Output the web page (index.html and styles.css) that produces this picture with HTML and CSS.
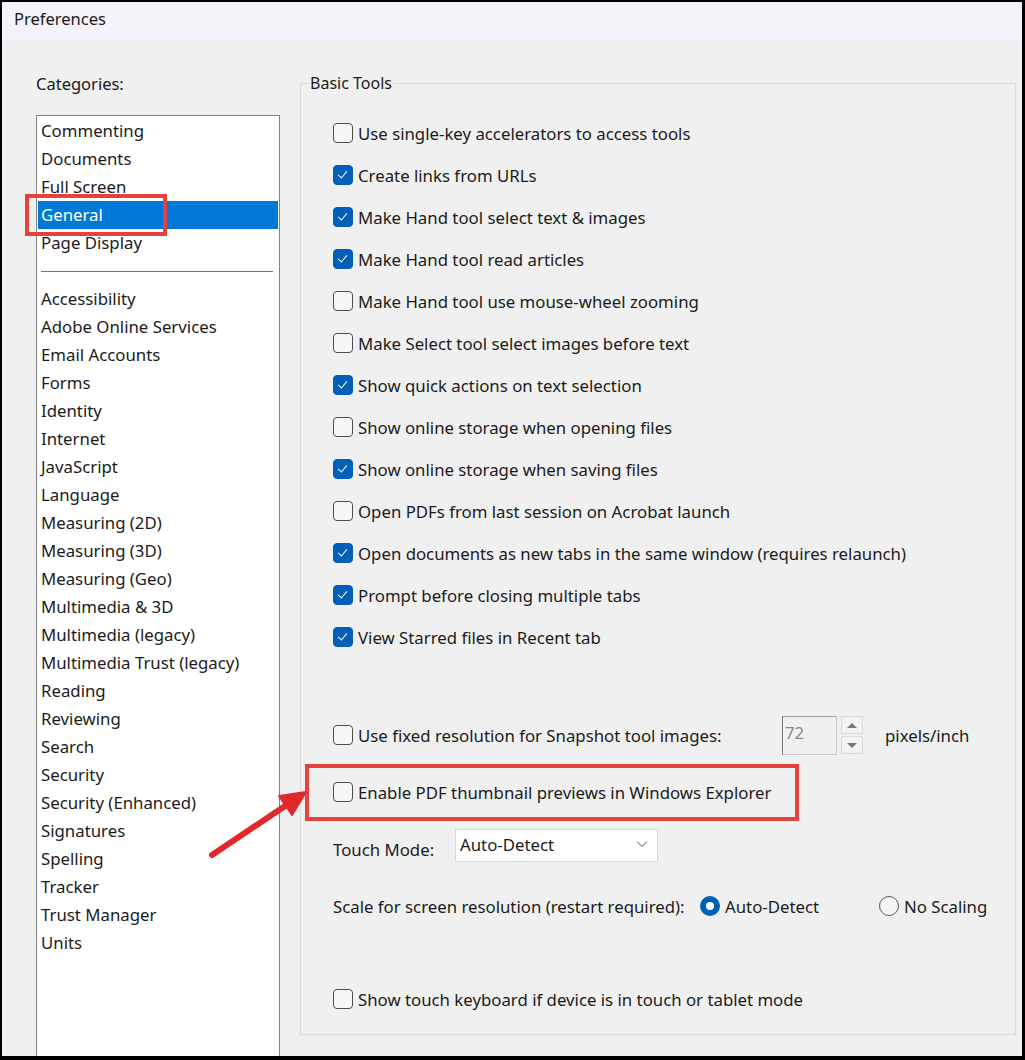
FILE: index.html
```html
<!DOCTYPE html>
<html>
<head>
<meta charset="utf-8">
<title>Preferences</title>
<link rel="stylesheet" href="styles.css">
</head>
<body>
<div class="window">
  <div class="titlebar">Preferences</div>
  <div class="content">
    <div class="left">
      <div class="cat-label">Categories:</div>
      <div class="listbox">
        <div class="item">Commenting</div>
        <div class="item">Documents</div>
        <div class="item">Full Screen</div>
        <div class="item selected">General<span class="mark-general"></span></div>
        <div class="item">Page Display</div>
        <div class="sep"><span></span></div>
        <div class="item">Accessibility</div>
        <div class="item">Adobe Online Services</div>
        <div class="item">Email Accounts</div>
        <div class="item">Forms</div>
        <div class="item">Identity</div>
        <div class="item">Internet</div>
        <div class="item">JavaScript</div>
        <div class="item">Language</div>
        <div class="item">Measuring (2D)</div>
        <div class="item">Measuring (3D)</div>
        <div class="item">Measuring (Geo)</div>
        <div class="item">Multimedia &amp; 3D</div>
        <div class="item">Multimedia (legacy)</div>
        <div class="item">Multimedia Trust (legacy)</div>
        <div class="item">Reading</div>
        <div class="item">Reviewing</div>
        <div class="item">Search</div>
        <div class="item">Security</div>
        <div class="item">Security (Enhanced)</div>
        <div class="item">Signatures</div>
        <div class="item">Spelling</div>
        <div class="item">Tracker</div>
        <div class="item">Trust Manager</div>
        <div class="item">Units</div>
      </div>
    </div>
    <fieldset class="group">
      <legend>Basic Tools</legend>
      <div class="rows">
        <div class="row"><span class="cb"></span><span>Use single-key accelerators to access tools</span></div>
        <div class="row"><span class="cb on"></span><span>Create links from URLs</span></div>
        <div class="row"><span class="cb on"></span><span>Make Hand tool select text &amp; images</span></div>
        <div class="row"><span class="cb on"></span><span>Make Hand tool read articles</span></div>
        <div class="row"><span class="cb"></span><span>Make Hand tool use mouse-wheel zooming</span></div>
        <div class="row"><span class="cb"></span><span>Make Select tool select images before text</span></div>
        <div class="row"><span class="cb on"></span><span>Show quick actions on text selection</span></div>
        <div class="row"><span class="cb"></span><span>Show online storage when opening files</span></div>
        <div class="row"><span class="cb on"></span><span>Show online storage when saving files</span></div>
        <div class="row"><span class="cb"></span><span>Open PDFs from last session on Acrobat launch</span></div>
        <div class="row"><span class="cb on"></span><span>Open documents as new tabs in the same window (requires relaunch)</span></div>
        <div class="row"><span class="cb on"></span><span>Prompt before closing multiple tabs</span></div>
        <div class="row"><span class="cb on"></span><span>View Starred files in Recent tab</span></div>

        <div class="row snapshot">
          <div class="snap-label"><span class="cb"></span><span>Use fixed resolution for Snapshot tool images:</span></div>
          <div class="numbox">72</div>
          <div class="spinner">
            <div class="spin"><span class="tri up"></span></div>
            <div class="spin"><span class="tri down"></span></div>
          </div>
          <span class="unit">pixels/inch</span>
        </div>

        <div class="row thumb"><span class="cb"></span><span>Enable PDF thumbnail previews in Windows Explorer</span><span class="mark-thumb"></span></div>

        <div class="row touch">
          <span class="touch-label">Touch Mode:</span>
          <div class="select"><span>Auto-Detect</span>
            <svg class="chev" width="12" height="8" viewBox="0 0 12 8"><path d="M1 1.5 L6 6.5 L11 1.5" fill="none" stroke="#555" stroke-width="1"/></svg>
          </div>
        </div>

        <div class="row scale">
          <span class="scale-label">Scale for screen resolution (restart required):</span>
          <div class="radio-opt first"><span class="rd on"></span><span>Auto-Detect</span></div>
          <div class="radio-opt"><span class="rd"></span><span>No Scaling</span></div>
        </div>

        <div class="row keyboard"><span class="cb"></span><span>Show touch keyboard if device is in touch or tablet mode</span></div>
      </div>
    </fieldset>
  </div>
  <svg class="arrow" width="120" height="90" viewBox="0 0 120 90">
    <line x1="12" y1="75" x2="88" y2="24" stroke="#e3282b" stroke-width="6" stroke-linecap="round"/>
    <polygon points="106,12 92,35 79,16" fill="#e3282b" stroke="#e3282b" stroke-width="2" stroke-linejoin="round"/>
  </svg>
</div>
</body>
</html>
```

FILE: styles.css
```css
html, body {
  margin: 0;
  padding: 0;
  background: #000;
}

body {
  font-family: "Noto Sans", "Open Sans", sans-serif;
  font-size: 16.8px;
  color: #1b1b1b;
}

.window {
  position: relative;
  margin: 2px 3px 4px 2px;
  height: 1054px;
  background: #f0f0f0;
  overflow: hidden;
  display: flex;
  flex-direction: column;
}

.titlebar {
  height: 38px;
  line-height: 34px;
  padding-left: 12px;
  background: #f5f3f9;
  font-size: 16.5px;
  color: #1a1a1a;
}

.content {
  flex: 1;
  display: flex;
  padding-left: 34px;
  gap: 20px;
  min-height: 0;
}

.left {
  width: 244px;
  display: flex;
  flex-direction: column;
}

.cat-label {
  margin-top: 30px;
  height: 28px;
  line-height: 28px;
  font-size: 16.5px;
}

.listbox {
  margin-top: 17px;
  flex: 1;
  background: #fff;
  border: 1px solid #828282;
  border-bottom: none;
  padding-top: 1px;
}

.item {
  position: relative;
  height: 28px;
  line-height: 28px;
  margin: 0 1px;
  padding-left: 3px;
  white-space: nowrap;
  color: #1b1b1b;
}

.item.selected {
  background: #0078d7;
  color: #fff;
}

.mark-general {
  position: absolute;
  left: -13px;
  top: -7px;
  width: 142px;
  height: 42px;
  box-sizing: border-box;
  border: 4px solid #e8403f;
}

.sep {
  height: 28px;
  display: flex;
  align-items: center;
  padding: 0 6px 0 4px;
}

.sep span {
  flex: 1;
  height: 1px;
  background: #3f7fae;
}

.group {
  flex: 1;
  margin: 31px 6px 21px 0;
  border: 1px solid #dcdcdc;
  padding: 17px 0 0 8px;
  min-width: 0;
}

.group legend {
  padding: 0 1px;
  height: 24px;
  line-height: 24px;
  font-size: 16px;
}

.rows {
  padding-left: 24px;
  display: flex;
  flex-direction: column;
}

.row {
  position: relative;
  height: 42px;
  display: flex;
  align-items: center;
  white-space: nowrap;
}

.cb {
  width: 20px;
  height: 20px;
  box-sizing: border-box;
  border: 1px solid #4d4d4d;
  border-radius: 4px;
  background: #f7f7f7;
  margin-right: 5px;
  flex: none;
  position: relative;
}

.cb.on {
  background: #005fb8;
  border-color: #005fb8;
}

.cb.on::after {
  content: "";
  position: absolute;
  left: 6px;
  top: 3px;
  width: 4px;
  height: 8px;
  border: solid #fff;
  border-width: 0 1.3px 1.3px 0;
  transform: rotate(40deg);
}

.snapshot {
  margin-top: 56px;
}

.snap-label {
  width: 449px;
  display: flex;
  align-items: center;
}

.numbox {
  width: 55px;
  height: 39px;
  box-sizing: border-box;
  border: 1px solid #c8c8c8;
  border-left-color: #7a7a7a;
  border-top-color: #a0a0a0;
  background: #f0f0f0;
  color: #8a8a8a;
  padding: 4px 0 0 2px;
  line-height: 24px;
  align-self: center;
}

.spinner {
  margin-left: 4px;
  width: 22px;
  display: flex;
  flex-direction: column;
  gap: 2px;
}

.spin {
  height: 18px;
  box-sizing: border-box;
  border: 1px solid #dadada;
  background: #f3f3f3;
  display: flex;
  align-items: center;
  justify-content: center;
}

.tri {
  width: 0;
  height: 0;
  border-left: 5px solid transparent;
  border-right: 5px solid transparent;
}

.tri.up {
  border-bottom: 5px solid #777;
}

.tri.down {
  border-top: 5px solid #777;
}

.unit {
  margin-left: 22px;
}

.thumb {
  margin-top: 15px;
}

.mark-thumb {
  position: absolute;
  left: -28px;
  top: -7px;
  width: 494px;
  height: 57px;
  box-sizing: border-box;
  border: 4px solid #e8403f;
}

.touch {
  margin-top: 15px;
  height: 34px;
  align-items: center;
}

.touch-label {
  width: 122px;
  padding-top: 9px;
}

.select {
  width: 203px;
  height: 33px;
  box-sizing: border-box;
  background: #fff;
  border: 1px solid #d9d9d9;
  display: flex;
  align-items: center;
  justify-content: space-between;
  padding: 0 9px 2px 4px;
}

.chev {
  display: block;
}

.scale {
  margin-top: 23px;
}

.scale-label {
  width: 367px;
}

.radio-opt {
  display: flex;
  align-items: center;
}

.radio-opt.first {
  width: 179px;
}

.rd {
  width: 20px;
  height: 20px;
  box-sizing: border-box;
  border-radius: 50%;
  border: 1px solid #5a5a5a;
  background: #f5f5f5;
  margin-right: 5px;
  position: relative;
}

.rd.on {
  border: 6px solid #005fb8;
  background: #fff;
}

.keyboard {
  margin-top: 51px;
}

.arrow {
  position: absolute;
  left: 198px;
  top: 778px;
}
```
